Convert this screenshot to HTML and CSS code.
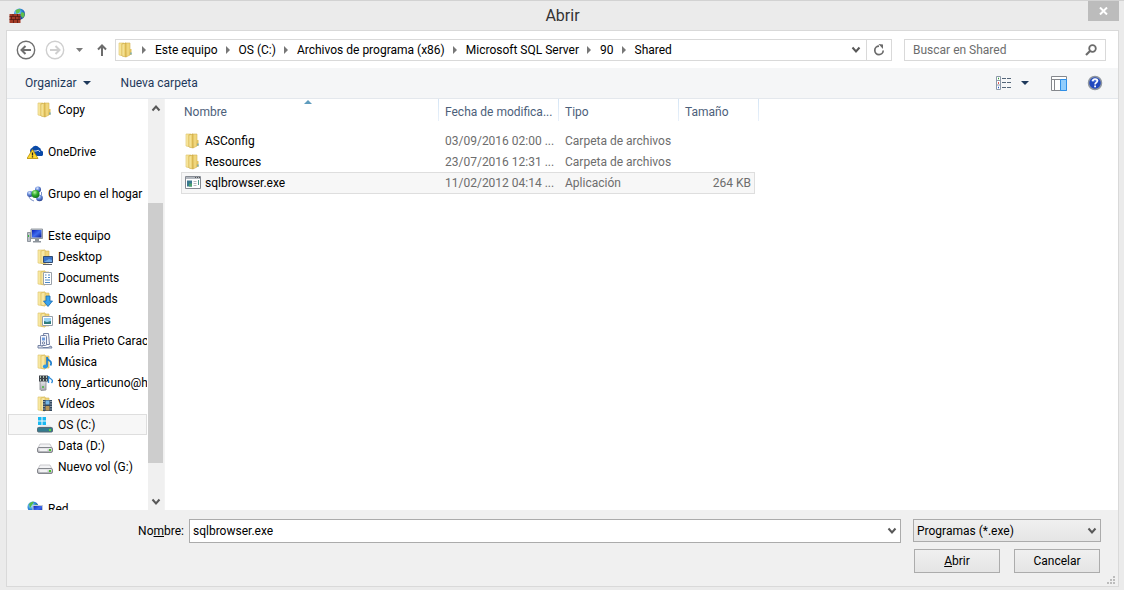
FILE: index.html
```
<!DOCTYPE html>
<html lang="es">
  <head>
    <meta charset="UTF-8" />
    <meta name="viewport" content="width=device-width, initial-scale=1" />
    <title>Abrir</title>
    <link rel="stylesheet" href="styles.css" />
  </head>
  <body>
    <!-- Shared icons -->
    <svg class="defs" aria-hidden="true">
      <defs>
        <linearGradient id="gold" x1="0" x2="1">
          <stop offset="0" stop-color="#fbf0b4" />
          <stop offset="0.5" stop-color="#f3dc85" />
          <stop offset="1" stop-color="#dcb84c" />
        </linearGradient>
        <linearGradient id="screen" x1="0" x2="1" y1="0" y2="1">
          <stop offset="0" stop-color="#0a1fb4" />
          <stop offset="0.5" stop-color="#3f6cf0" />
          <stop offset="1" stop-color="#0a1a90" />
        </linearGradient>
        <radialGradient id="globe" cx="0.35" cy="0.35" r="0.7">
          <stop offset="0" stop-color="#b8ecff" />
          <stop offset="0.5" stop-color="#2f8fe0" />
          <stop offset="1" stop-color="#123c9c" />
        </radialGradient>
        <radialGradient id="blueball" cx="0.4" cy="0.3" r="0.7">
          <stop offset="0" stop-color="#dfe9ff" />
          <stop offset="0.5" stop-color="#6488d8" />
          <stop offset="1" stop-color="#27408f" />
        </radialGradient>
        <radialGradient id="greenball" cx="0.4" cy="0.3" r="0.7">
          <stop offset="0" stop-color="#b9f5a0" />
          <stop offset="0.5" stop-color="#32ad2e" />
          <stop offset="1" stop-color="#12701a" />
        </radialGradient>
        <linearGradient id="metal" x1="0" x2="0" y1="0" y2="1">
          <stop offset="0" stop-color="#f4f4f6" />
          <stop offset="1" stop-color="#a5a7ad" />
        </linearGradient>
      </defs>
      <symbol id="folder" viewBox="1 0 16 16">
        <path d="M2 1h5v13l-5-1z" fill="url(#gold)" stroke="#dcbf62" stroke-width="0.6" />
        <path d="M8 1h5v12l-4 2z" fill="#f0d67c" stroke="#d3b150" stroke-width="0.6" />
        <path d="M5 2l4-1v14l-4-1z" fill="url(#gold)" stroke="#c9a63f" stroke-width="0.6" />
        <path d="M13 7h1.500v6H12z" fill="#e2c15d" />
        <path d="M14 10.500v2" stroke="#3f9bd8" />
      </symbol>
      <symbol id="folder-open" viewBox="0 0 16 16">
        <path d="M1 1h7v14l-7-1z" fill="url(#gold)" stroke="#dcbf62" stroke-width="0.6" />
        <path d="M7 2h5v12H7z" fill="#f0d67c" stroke="#d3b150" stroke-width="0.6" />
        <path d="M4 2l4-1v14l-4-1z" fill="#f7e7a2" stroke="#d6b754" stroke-width="0.6" />
      </symbol>
      <symbol id="drive" viewBox="0 0 16 16">
        <path d="M3 6h10l2 4H1z" fill="#f3f3f5" stroke="#b4b5ba" stroke-width="0.7" />
        <rect x="0.500" y="9.500" width="15" height="5" rx="1.500" fill="url(#metal)" stroke="#85878d" />
        <rect x="2.500" y="11" width="8" height="2" fill="#f2f2f4" />
        <rect x="12" y="11" width="2" height="2" fill="#46c42c" />
      </symbol>
      <symbol id="chevron" viewBox="0 0 10 8">
        <path d="M1.500 1.500L5 5.500l3.500-4" fill="none" stroke="#585858" stroke-width="2" />
      </symbol>
    </svg>

    <div class="dialog">
      <header class="titlebar">
        <svg class="app-icon" viewBox="0 0 16 16">
          <circle cx="10" cy="6" r="5.500" fill="url(#globe)" />
          <path d="M6 2.500q3-2.500 5-1l-1 3-3 1.500zM12 4l3 1v3l-2 2-2-3z" fill="#5fc04a" />
          <path d="M0 6h11v9H0z" fill="#a33b26" />
          <path d="M0 8.500h11M0 11.500h11M3.500 6v2.500M8 6v2.500M2 8.500v3M6 8.500v3M9.500 8.500v3M4 11.500V15M8 11.500V15" stroke="#4c1710" stroke-width="0.700" />
        </svg>
        <h1>Abrir</h1>
        <button class="close" type="button" aria-label="Cerrar">
          <svg width="9" height="8" viewBox="0 0 9 8"><path d="M1 0.500l7 7M8 0.500l-7 7" stroke="#fff" stroke-width="2" /></svg>
        </button>
      </header>

      <div class="window">
        <nav class="navbar" aria-label="Ubicación">
          <button class="nav-btn" type="button" aria-label="Atrás">
            <svg width="20" height="20" viewBox="0 0 20 20" fill="none" stroke="#6f6f6f">
              <circle cx="10" cy="10" r="8.700" stroke-width="1.400" />
              <path d="M15 10H6M9.500 6L5.500 10l4 4" stroke-width="2" />
            </svg>
          </button>
          <button class="nav-btn" type="button" aria-label="Adelante" disabled>
            <svg width="20" height="20" viewBox="0 0 20 20" fill="none" stroke="#cfcfcf">
              <circle cx="10" cy="10" r="8.700" stroke-width="1.400" />
              <path d="M5 10h9M10.500 6l4 4-4 4" stroke-width="2" />
            </svg>
          </button>
          <button class="nav-btn recent" type="button" aria-label="Ubicaciones recientes">
            <svg width="7" height="4" viewBox="0 0 7 4"><path d="M0 0h7L3.500 4z" fill="#7a7a7a" /></svg>
          </button>
          <button class="nav-btn up" type="button" aria-label="Subir">
            <svg width="10" height="12" viewBox="0 0 10 12" fill="none" stroke="#6c6c6c" stroke-width="2"><path d="M5 12V2M1 5.500l4-4 4 4" /></svg>
          </button>

          <div class="address">
            <svg class="icon"><use href="#folder" /></svg>
            <ol class="crumbs">
              <li><a href="#">Este equipo</a></li>
              <li><a href="#">OS (C:)</a></li>
              <li><a href="#">Archivos de programa (x86)</a></li>
              <li><a href="#">Microsoft SQL Server</a></li>
              <li><a href="#">90</a></li>
              <li><a href="#">Shared</a></li>
            </ol>
            <button class="drop" type="button" aria-label="Ubicaciones anteriores">
              <svg width="10" height="8"><use href="#chevron" /></svg>
            </button>
            <button class="refresh" type="button" aria-label="Actualizar">
              <svg width="12" height="12" viewBox="0 0 12 12">
                <path d="M6 2.200A4.200 4.200 0 1 0 10.200 6.500" fill="none" stroke="#6b6b6b" stroke-width="1.700" />
                <path d="M5.500 0l4.500 0.500v4.500z" fill="#6b6b6b" />
              </svg>
            </button>
          </div>

          <div class="search">
            <input type="text" aria-label="Buscar en Shared" placeholder="Buscar en Shared" />
            <svg width="12" height="12" viewBox="0 0 12 12" fill="none" stroke="#6b6b6b">
              <circle cx="7.500" cy="4.500" r="3.300" stroke-width="1.800" />
              <path d="M5 7L1 11" stroke-width="2.200" />
            </svg>
          </div>
        </nav>

        <div class="toolbar">
          <button class="command" type="button">
            Organizar
            <svg width="8" height="4" viewBox="0 0 8 4"><path d="M0 0h8L4 4z" fill="#1e395b" /></svg>
          </button>
          <button class="command" type="button">Nueva carpeta</button>
          <div class="views">
            <button class="view-btn" type="button" aria-label="Cambiar la vista">
              <svg width="16" height="14" viewBox="0 0 16 14">
                <path d="M0.500 0.500h4v13h-4zM0.500 4.500h4M0.500 9h4" fill="#fff" stroke="#8b98a8" />
                <path d="M2 2.500h1" stroke="#2d9a35" stroke-width="1.500" />
                <path d="M2 7h1" stroke="#d8201c" stroke-width="1.500" />
                <path d="M2 11.500h1" stroke="#2456c8" stroke-width="1.500" />
                <path d="M6 2.500h4M11 2.500h4M6 6.500h4M11 6.500h4M6 11.500h4M11 11.500h4" stroke="#536579" />
              </svg>
            </button>
            <button class="view-btn" type="button" aria-label="Más opciones">
              <svg width="8" height="4" viewBox="0 0 8 4"><path d="M0 0h8L4 4z" fill="#1e395b" /></svg>
            </button>
            <button class="view-btn preview" type="button" aria-label="Panel de vista previa">
              <svg width="16" height="15" viewBox="0 0 16 15">
                <path d="M0.500 0.500h15v14h-15zM0.500 3.500h15M3.500 3.500v11" fill="#fff" stroke="#85888d" />
                <path d="M9.500 3.500h6v11h-6z" fill="#91cdfc" stroke="#2d8fe8" />
              </svg>
            </button>
            <button class="view-btn help" type="button" aria-label="Ayuda">
              <svg width="16" height="16" viewBox="0 0 16 16">
                <circle cx="8" cy="8" r="6.500" fill="#2148be" stroke="#8f969f" stroke-width="1.500" />
                <path d="M3.500 6q4-5 9 0-4 1-9 0" fill="#5c82e4" />
                <path d="M5.800 6.200q0-2.200 2.300-2.200t2.200 2q0 1-1.200 1.700-1 0.600-1 1.800" fill="none" stroke="#fff" stroke-width="1.700" />
                <path d="M7.200 10.500h1.800v1.700H7.200z" fill="#fff" />
              </svg>
            </button>
          </div>
        </div>

        <div class="content">
          <aside class="sidebar">
            <ul class="tree">
              <li class="child"><svg class="icon"><use href="#folder" /></svg>Copy</li>
              <li class="root gap">
                <svg class="icon" viewBox="0 0 16 16">
                  <path d="M4 9a3 3 0 0 1 1-5 4 4 0 0 1 7-0.500A3 3 0 0 1 14 6.500 3 3 0 0 1 15 12H5z" fill="#0a4aa8" />
                  <path d="M5 9q1-3 4-2 3-2 4 1" fill="none" stroke="#fff" stroke-width="0.8" />
                  <path d="M5.500 5.500L11 14.500H0z" fill="#ffd92e" stroke="#b58b00" stroke-width="0.8" />
                  <path d="M5.500 8.500v3M5.500 12.300v1.200" stroke="#222" stroke-width="1.300" />
                </svg>
                OneDrive
              </li>
              <li class="root gap">
                <svg class="icon" viewBox="0 0 16 16">
                  <circle cx="11" cy="3.500" r="3" fill="url(#blueball)" />
                  <circle cx="3" cy="8" r="3" fill="url(#blueball)" />
                  <circle cx="12.500" cy="12" r="3.300" fill="url(#blueball)" />
                  <circle cx="8.500" cy="8" r="4" fill="url(#greenball)" />
                  <path d="M2 11q1 3 5 4M14.500 6v3" fill="none" stroke="#7d93c9" />
                </svg>
                Grupo en el hogar
              </li>
              <li class="root gap">
                <svg class="icon" viewBox="0 0 16 16">
                  <path d="M0.500 4.500h3v9h-3z" fill="#b9bfc6" stroke="#7c848d" stroke-width="0.8" />
                  <path d="M1.500 7v2" stroke="#32b83a" />
                  <path d="M4 1h11.500v9.500H4z" fill="#c9ced6" stroke="#7e858e" stroke-width="0.8" />
                  <path d="M5 2h9.500v7.500H5z" fill="url(#screen)" />
                  <path d="M8 11h4v2h2v1.500H6V13h2z" fill="#8d949c" />
                </svg>
                Este equipo
              </li>
              <li class="child">
                <svg class="icon" viewBox="0 0 16 16">
                  <use href="#folder-open" />
                  <path d="M6.500 7.500h9v6h-9z" fill="#3971c8" stroke="#314b73" />
                  <path d="M7 13l5-3 3 1v2z" fill="#6ea8e6" />
                  <path d="M6 15.500h9" stroke="#5a6069" />
                </svg>
                Desktop
              </li>
              <li class="child">
                <svg class="icon" viewBox="0 0 16 16">
                  <use href="#folder-open" />
                  <path d="M6.500 2.500h8v12h-8z" fill="#fff" stroke="#9aa1a9" />
                  <path d="M8 5h1.500M11 5h2M8 7.500h1.500M11 7.500h2M8 10h5M8 12.500h5" stroke="#4e8ac9" />
                </svg>
                Documents
              </li>
              <li class="child">
                <svg class="icon" viewBox="0 0 16 16">
                  <use href="#folder-open" />
                  <path d="M9 5h4v5h2.500L11 15.500 6.500 10H9z" fill="#39a2ec" stroke="#1769b4" stroke-width="0.8" />
                </svg>
                Downloads
              </li>
              <li class="child">
                <svg class="icon" viewBox="0 0 16 16">
                  <use href="#folder-open" />
                  <path d="M5.500 4.500h10v9h-10z" fill="#fff" stroke="#97a0aa" />
                  <path d="M7 6h7v6H7z" fill="#9bd4f5" />
                  <path d="M7 12V9l3 1 4-1v3z" fill="#2e7c7c" />
                </svg>
                Imágenes
              </li>
              <li class="child">
                <svg class="icon" viewBox="0 0 16 16" fill="#f5f7fc" stroke="#7583a5">
                  <path d="M6.500 0.500h5l1 11h-5z" />
                  <rect x="3.500" y="2.500" width="6" height="10" rx="1" />
                  <path d="M5 4.500h3v3H5z" fill="#6f9cdf" stroke="none" />
                  <circle cx="6.500" cy="10" r="1.200" />
                  <path d="M1 12.500h3l2 2h5l3-1.500 1 2H1z" fill="#dfe3ec" />
                </svg>
                Lilia Prieto Caraciolo
              </li>
              <li class="child">
                <svg class="icon" viewBox="0 0 16 16">
                  <use href="#folder-open" />
                  <path d="M10 13V3q0 2.500 3 4 2 1.500 0.500 4.500" fill="none" stroke="#1f7fcc" stroke-width="1.700" />
                  <ellipse cx="8.200" cy="12.500" rx="2.300" ry="2" fill="#2e9ae6" />
                </svg>
                Música
              </li>
              <li class="child">
                <svg class="icon" viewBox="0 0 16 16">
                  <path d="M3 4h6v11l-5 0.500-1-1z" fill="url(#metal)" stroke="#85888d" stroke-width="0.8" />
                  <path d="M2 0.500h9v6H2z" fill="#3d4248" />
                  <path d="M3 2h1M6 2h1M9 2h1M3 5h1M6 5h1M9 5h1" stroke="#cfe9d0" stroke-width="1.500" />
                  <path d="M11.500 8V1q0 1.500 2.500 3t0.500 4" fill="none" stroke="#2c8bd8" stroke-width="1.400" />
                  <path d="M5 12h2" stroke="#47b63b" stroke-width="1.500" />
                </svg>
                tony_articuno@hotmail.com
              </li>
              <li class="child">
                <svg class="icon" viewBox="0 0 16 16">
                  <use href="#folder-open" />
                  <path d="M6 4h9v11H6z" fill="#33485f" />
                  <path d="M8.500 4.500h4v4h-4z" fill="#75b6e6" />
                  <path d="M8.500 10h4v4.500h-4z" fill="#b89556" />
                  <path d="M7 5v10M14 5v10" stroke="#e7ecf2" stroke-dasharray="1 1.500" />
                </svg>
                Vídeos
              </li>
              <li class="child selected">
                <svg class="icon" viewBox="0 0 16 16">
                  <path d="M1 0h3.500v3.500H1zM5.500 0H9v3.500H5.500zM1 4.500h3.500V8H1zM5.500 4.500H9V8H5.500z" fill="#18b8f2" />
                  <path d="M3 8.500h10l2 2H1z" fill="#dfe1e4" />
                  <rect x="0.500" y="10.500" width="15" height="4.500" rx="1" fill="#347b90" stroke="#566b75" />
                  <rect x="12" y="12" width="2" height="2" fill="#5bdc38" />
                </svg>
                OS (C:)
              </li>
              <li class="child"><svg class="icon"><use href="#drive" /></svg>Data (D:)</li>
              <li class="child"><svg class="icon"><use href="#drive" /></svg>Nuevo vol (G:)</li>
              <li class="root gap">
                <svg class="icon" viewBox="0 0 16 16">
                  <circle cx="6" cy="6" r="5.500" fill="url(#globe)" />
                  <path d="M2 3q3-3 5-2L5 4 3 7zM8 3l3 1-1 3z" fill="#55bb45" />
                  <path d="M6 4.500h9.500V12H6z" fill="url(#screen)" stroke="#c3c9d2" />
                </svg>
                Red
              </li>
            </ul>
            <div class="scrollbar">
              <button type="button" aria-label="Desplazar hacia arriba">
                <svg class="flip" width="10" height="8"><use href="#chevron" /></svg>
              </button>
              <div class="track"><div class="thumb"></div></div>
              <button type="button" aria-label="Desplazar hacia abajo">
                <svg width="10" height="8"><use href="#chevron" /></svg>
              </button>
            </div>
          </aside>

          <main class="files">
            <table>
              <colgroup>
                <col class="col-name" />
                <col class="col-date" />
                <col class="col-type" />
                <col class="col-size" />
              </colgroup>
              <thead>
                <tr>
                  <th class="sorted" aria-sort="ascending">Nombre</th>
                  <th>Fecha de modifica...</th>
                  <th>Tipo</th>
                  <th>Tamaño</th>
                </tr>
              </thead>
              <tbody>
                <tr>
                  <td><span class="file"><svg class="icon"><use href="#folder" /></svg>ASConfig</span></td>
                  <td>03/09/2016 02:00 ...</td>
                  <td>Carpeta de archivos</td>
                  <td></td>
                </tr>
                <tr>
                  <td><span class="file"><svg class="icon"><use href="#folder" /></svg>Resources</span></td>
                  <td>23/07/2016 12:31 ...</td>
                  <td>Carpeta de archivos</td>
                  <td></td>
                </tr>
                <tr class="selected">
                  <td>
                    <span class="file">
                      <svg class="icon" viewBox="0 0 16 16">
                        <path d="M0.500 1.500h15v12h-15z" fill="#fff" stroke="#868b93" />
                        <path d="M1 3h14" stroke="#b3b8bf" stroke-width="2" />
                        <path d="M10 2.500h1M12 2.500h1M14 2.500h1" stroke="#555" />
                        <path d="M2 5.500h5v6H2z" fill="#39788f" />
                        <path d="M4 8.500h3v3H4z" fill="#4da36c" />
                        <path d="M8.500 6.500h3M8.500 8.500h3M8.500 10.500h3" stroke="#b5b9be" />
                        <path d="M13.500 5v5" stroke="#4f9a8c" />
                      </svg>
                      sqlbrowser.exe
                    </span>
                  </td>
                  <td>11/02/2012 04:14 ...</td>
                  <td>Aplicación</td>
                  <td>264 KB</td>
                </tr>
              </tbody>
            </table>
          </main>
        </div>

        <footer class="footer">
          <label for="fileName">No<u>m</u>bre:</label>
          <div class="filename">
            <input type="text" id="fileName" value="sqlbrowser.exe" />
            <button type="button" aria-label="Nombres recientes">
              <svg width="10" height="8"><use href="#chevron" /></svg>
            </button>
          </div>
          <div class="filter">
            <select aria-label="Tipo de archivo">
              <option>Programas (*.exe)</option>
            </select>
            <svg width="10" height="8"><use href="#chevron" /></svg>
          </div>
          <div class="actions">
            <button class="btn" type="button"><span><u>A</u>brir</span></button>
            <button class="btn" type="button">Cancelar</button>
          </div>
          <svg class="grip" width="8" height="8" viewBox="0 0 8 8" fill="#bcbcbc">
            <path d="M6 0h2v2H6zM3 3h2v2H3zM6 3h2v2H6zM0 6h2v2H0zM3 6h2v2H3zM6 6h2v2H6z" />
          </svg>
        </footer>
      </div>
    </div>
  </body>
</html>
```
FILE: styles.css
```
* {
  box-sizing: border-box;
}
body {
  margin: 0;
  font-family: Roboto, "Noto Sans", sans-serif;
  font-size: 12px;
  line-height: 20px;
  color: #000;
  background: #ebebeb;
}
button,
input,
select {
  font: inherit;
  color: inherit;
}
button {
  display: flex;
  align-items: center;
  justify-content: center;
  padding: 0;
  border: none;
  background: none;
}
input {
  min-width: 0;
  border: none;
  outline: none;
  background: none;
}
svg {
  display: block;
  flex: none;
}
ul,
ol {
  margin: 0;
  padding: 0;
  list-style: none;
}
.defs {
  position: absolute;
  width: 0;
  height: 0;
}
.icon {
  width: 16px;
  height: 16px;
}
.dialog {
  display: flex;
  flex-direction: column;
  height: 100vh;
  padding: 0 5px 3px 6px;
  border-top: 1px solid #d2d2d2;
}

/* Title bar */
.titlebar {
  display: grid;
  grid-template-columns: 1fr auto 1fr;
  align-items: center;
  height: 29px;
}
.app-icon {
  width: 17px;
  height: 16px;
  margin-left: 3px;
}
.titlebar h1 {
  margin: 0;
  font-size: 16px;
  font-weight: 400;
  color: #333;
}
.close {
  justify-self: end;
  align-self: start;
  width: 31px;
  height: 20px;
  background: #bcbcbc;
}
.window {
  flex: 1;
  min-height: 0;
  display: flex;
  flex-direction: column;
  border: 1px solid #d9d9d9;
  background: #fff;
}

/* Address row */
.navbar {
  display: flex;
  align-items: center;
  height: 37px;
  padding: 0 12px 0 9px;
}
.nav-btn {
  width: 20px;
  height: 20px;
  margin-right: 9px;
}
.recent {
  width: 10px;
  margin-right: 12px;
}
.up {
  width: 12px;
  margin-right: 7px;
}
.address {
  flex: 1;
  min-width: 0;
  display: flex;
  align-items: center;
  height: 22px;
  padding-left: 2px;
  border: 1px solid #d9d9d9;
}
.crumbs {
  flex: 1;
  min-width: 0;
  display: flex;
  overflow: hidden;
  white-space: nowrap;
}
.crumbs li {
  display: flex;
  align-items: center;
  padding-left: 8px;
}
.crumbs li::before {
  content: "";
  margin-right: 9px;
  border: 4px solid transparent;
  border-left-color: #777;
  border-right-width: 0;
}
.crumbs a {
  color: inherit;
  text-decoration: none;
}
.drop {
  width: 20px;
  height: 20px;
}
.refresh {
  width: 25px;
  height: 20px;
  border-left: 1px solid #d9d9d9;
}
.search {
  display: flex;
  align-items: center;
  width: 202px;
  height: 22px;
  margin-left: 12px;
  padding: 0 8px;
  border: 1px solid #d9d9d9;
}
.search input {
  flex: 1;
  padding: 0;
}
.search input::placeholder {
  color: #6d6d6d;
  opacity: 1;
}

/* Command bar */
.toolbar {
  display: flex;
  align-items: center;
  gap: 30px;
  height: 31px;
  padding: 0 15px 0 18px;
  border-bottom: 1px solid #e4e8ed;
  background: #f5f6f7;
  color: #1e395b;
}
.command {
  gap: 6px;
}
.views {
  display: flex;
  align-items: center;
  margin-left: auto;
}
.view-btn {
  height: 20px;
  margin-left: 9px;
}
.preview {
  margin-left: 22px;
}
.help {
  margin-left: 20px;
}

/* Folder tree */
.content {
  flex: 1;
  min-height: 0;
  display: flex;
}
.sidebar {
  display: flex;
  width: 158px;
  padding-left: 1px;
  border-right: 1px solid #f3f3f3;
}
.tree {
  flex: 1;
  min-width: 0;
  overflow: hidden;
}
.tree li {
  display: flex;
  align-items: center;
  gap: 5px;
  height: 21px;
  margin-right: 1px;
  overflow: hidden;
  white-space: nowrap;
}
.tree .root {
  padding-left: 19px;
}
.tree .child {
  padding-left: 29px;
}
.tree .gap {
  margin-top: 21px;
}
.tree .selected {
  padding-left: 28px;
  border: 1px solid #dedede;
  background: #f7f7f7;
}
.scrollbar {
  display: flex;
  flex-direction: column;
  width: 16px;
  padding-right: 1px;
  background: #f0f0f0;
}
.scrollbar button {
  height: 17px;
}
.flip {
  transform: rotate(180deg);
}
.track {
  flex: 1;
  display: flex;
  flex-direction: column;
}
.track::before {
  content: "";
  flex: 87;
}
.thumb {
  flex: 261;
  background: #cdcdcd;
}
.track::after {
  content: "";
  flex: 30;
}

/* File list */
.files {
  flex: 1;
  min-width: 0;
  padding-left: 16px;
}
table {
  width: 574px;
  table-layout: fixed;
  border-collapse: separate;
  border-spacing: 0;
}
.col-date,
.col-type {
  width: 120px;
}
.col-size {
  width: 77px;
}
th,
td {
  padding: 0 0 0 7px;
  overflow: hidden;
  text-align: left;
  font-weight: 400;
  white-space: nowrap;
}
th {
  position: relative;
  height: 31px;
  padding-bottom: 5px;
  overflow: visible;
  color: #4c607a;
}
th:first-child {
  padding-left: 3px;
}
td:first-child {
  padding-left: 4px;
}
th::after {
  content: "";
  position: absolute;
  top: 0;
  right: -1px;
  width: 1px;
  height: 22px;
  background: linear-gradient(#d5e5f5, #e9f1fa);
}
th:last-child::after {
  right: -4px;
}
.sorted::before {
  content: "";
  position: absolute;
  top: 1px;
  left: 123px;
  border: 4px solid transparent;
  border-top-width: 0;
  border-bottom-color: #5f9cbd;
}
td {
  height: 21px;
  color: #6d6d6d;
}
td:last-child {
  padding-right: 4px;
  text-align: right;
}
.file {
  display: flex;
  align-items: center;
  gap: 4px;
  color: #000;
}
tbody .selected td {
  height: 22px;
  border: solid #dedede;
  border-width: 1px 0;
  background: #f7f7f7;
}
tbody .selected td:first-child {
  padding-left: 3px;
  border-left-width: 1px;
}
tbody .selected td:last-child {
  padding-right: 3px;
  border-right-width: 1px;
}

/* File name and buttons */
.footer {
  position: relative;
  display: grid;
  grid-template-columns: 177px 1fr 188px;
  column-gap: 5px;
  row-gap: 6px;
  padding: 9px 17px 13px 0;
  background: #f0f0f0;
}
.footer label {
  align-self: center;
  text-align: right;
}
.filename {
  display: flex;
  height: 24px;
  margin-right: 7px;
  border: 1px solid #ababab;
  background: #fff;
}
.filename input {
  flex: 1;
  padding: 0 3px;
}
.filename button {
  width: 17px;
}
.filter {
  position: relative;
}
.filter select {
  display: block;
  width: 100%;
  height: 23px;
  padding: 0 20px 0 3px;
  border: 1px solid #ababab;
  border-radius: 0;
  appearance: none;
  background: linear-gradient(#f0f0f0, #e5e5e5);
}
.filter svg {
  position: absolute;
  top: 8px;
  right: 4px;
  pointer-events: none;
}
.actions {
  grid-column: 3;
  display: flex;
  gap: 14px;
  padding: 0 1px;
}
.btn {
  flex: 1;
  height: 24px;
  border: 1px solid #acacac;
  background: linear-gradient(#f0f0f0, #e5e5e5);
}
.grip {
  position: absolute;
  right: 3px;
  bottom: 2px;
}
```
